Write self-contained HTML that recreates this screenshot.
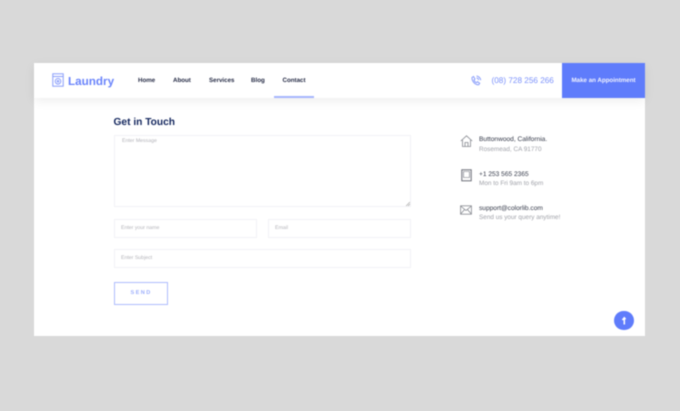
<!DOCTYPE html>
<html><head><meta charset="utf-8"><style>
html,body{margin:0;padding:0;width:680px;height:411px;background:#d9d9d9;overflow:hidden;font-family:"Liberation Sans",sans-serif;text-rendering:geometricPrecision}
.a{position:absolute;white-space:nowrap}
#card{position:absolute;left:34px;top:63px;width:611px;height:273px;background:#fff;overflow:hidden}
#root{position:absolute;left:0;top:0;width:680px;height:411px;filter:blur(.5px)}
#hdr{position:absolute;left:34px;top:63px;width:611px;height:34.5px;background:#fff;box-shadow:0 3px 10px rgba(0,0,0,.07)}
.n{top:76.500px;font-size:6.200px;font-weight:700;color:#1f2540;line-height:8px}
.box{position:absolute;border:1px solid #f2f2f6;box-sizing:border-box;background:#fff}
.ph{font-size:5.200px;color:#b4b4ba;line-height:7px}
.t1{font-size:6.600px;color:#333848;line-height:8px}
.t2{font-size:6.400px;color:#a0a2a9;line-height:8px}
</style></head><body><div id="root">
<div id="card"></div>
<div id="hdr"></div>
<svg class="a" style="left:52px;top:73px" width="12" height="14" viewBox="0 0 12 14" fill="none" stroke="#8a9efb" stroke-width="1"><rect x=".8" y=".8" width="10.400" height="12.400"/><path d="M.8 3.500h10.400"/><circle cx="6" cy="8.300" r="2.800"/><circle cx="6" cy="8.300" r=".8"/></svg>
<div class="a" style="left:68px;top:73.500px;font-size:11.700px;font-weight:700;color:#6a84fb;line-height:15px">Laundry</div>
<div class="a n" style="left:138px">Home</div>
<div class="a n" style="left:173px">About</div>
<div class="a n" style="left:209px">Services</div>
<div class="a n" style="left:251px">Blog</div>
<div class="a n" style="left:282.500px">Contact</div>
<div class="a" style="left:274px;top:96.300px;width:40px;height:1.500px;background:#a6b6fd"></div>
<svg class="a" style="left:470px;top:75px" width="12" height="12" viewBox="0 0 12 12" fill="none" stroke="#8a9efb" stroke-width="1"><path d="M2 2.500l1.500-1 1.500 2.500-1 1c.4 1.200 1.300 2.200 2.500 2.700l1-1 2.200 1.600-1 1.500C5.500 10 1.800 6.500 2 2.500z"/><path d="M6.500 1c2.200.2 4 2 4.200 4.200M6.500 3c1.200.1 2 .9 2.200 2.100"/></svg>
<div class="a" style="left:491.500px;top:75.500px;font-size:8.200px;color:#7d93fb;line-height:10px">(08) 728 256 266</div>
<div class="a" style="left:562px;top:63px;width:83px;height:34.500px;background:#5f7cfb"></div>
<div class="a" style="left:571.500px;top:76.500px;font-size:6.200px;font-weight:700;color:#f2f4ff;line-height:8px">Make an Appointment</div>
<div class="a" style="left:113.500px;top:115.500px;font-size:10.200px;font-weight:700;color:#14275e;line-height:14px">Get in Touch</div>
<div class="box" style="left:114px;top:135px;width:297px;height:72px"></div>
<div class="a ph" style="left:122px;top:138px">Enter Message</div>
<svg class="a" style="left:406px;top:202px" width="4" height="4" viewBox="0 0 4 4" stroke="#999" stroke-width=".6"><path d="M0 4L4 0M2 4L4 2"/></svg>
<div class="box" style="left:114px;top:218.500px;width:143px;height:19px"></div>
<div class="a ph" style="left:121px;top:225px">Enter your name</div>
<div class="box" style="left:268px;top:218.500px;width:143px;height:19px"></div>
<div class="a ph" style="left:275px;top:225px">Email</div>
<div class="box" style="left:114px;top:248.500px;width:297px;height:19px"></div>
<div class="a ph" style="left:121px;top:255px">Enter Subject</div>
<div class="box" style="left:114px;top:282px;width:54px;height:23px;border:1.500px solid #aebcfd"></div>
<div class="a" style="left:130.500px;top:290px;font-size:5.600px;font-weight:700;letter-spacing:1.400px;color:#9caefc;line-height:7px">SEND</div>
<svg class="a" style="left:460px;top:135px" width="13" height="12" viewBox="0 0 13 12" fill="none" stroke="#85888f" stroke-width=".8"><path d="M.8 6L6.500.8 12.200 6M2.500 5v6.500h8V5M5 11.500V7.500h3v4"/></svg>
<div class="a t1" style="left:479px;top:135.500px">Buttonwood, California.</div>
<div class="a t2" style="left:479px;top:145.500px">Rosemead, CA 91770</div>
<svg class="a" style="left:461px;top:169px" width="11" height="13" viewBox="0 0 11 13" fill="none" stroke="#6b6e78" stroke-width="1"><rect x=".8" y=".8" width="9.400" height="11"/><path d="M2.500 2.500h6v6h-6z" stroke-width=".6"/></svg>
<div class="a t1" style="left:479px;top:170.500px">+1 253 565 2365</div>
<div class="a t2" style="left:479px;top:180px">Mon to Fri 9am to 6pm</div>
<svg class="a" style="left:460px;top:205px" width="12" height="10" viewBox="0 0 12 10" fill="none" stroke="#85888f" stroke-width=".8"><rect x=".6" y=".8" width="10.800" height="8.400"/><path d="M.6 1l5.400 4.500L11.400 1M.6 9l4-4.500M11.400 9l-4-4.500"/></svg>
<div class="a t1" style="left:479px;top:204.500px">support@colorlib.com</div>
<div class="a t2" style="left:479px;top:214px">Send us your query anytime!</div>
<div class="a" style="left:614px;top:310.500px;width:19.500px;height:19.500px;border-radius:50%;background:#5f7cfb"></div>
<svg class="a" style="left:620px;top:316px" width="8" height="9" viewBox="0 0 8 9" fill="none" stroke="#fff" stroke-width="1.500"><path d="M4.300 8.500V2M2.400 4L4.300 1.800 5.600 3.200"/></svg>
</div></body></html>
